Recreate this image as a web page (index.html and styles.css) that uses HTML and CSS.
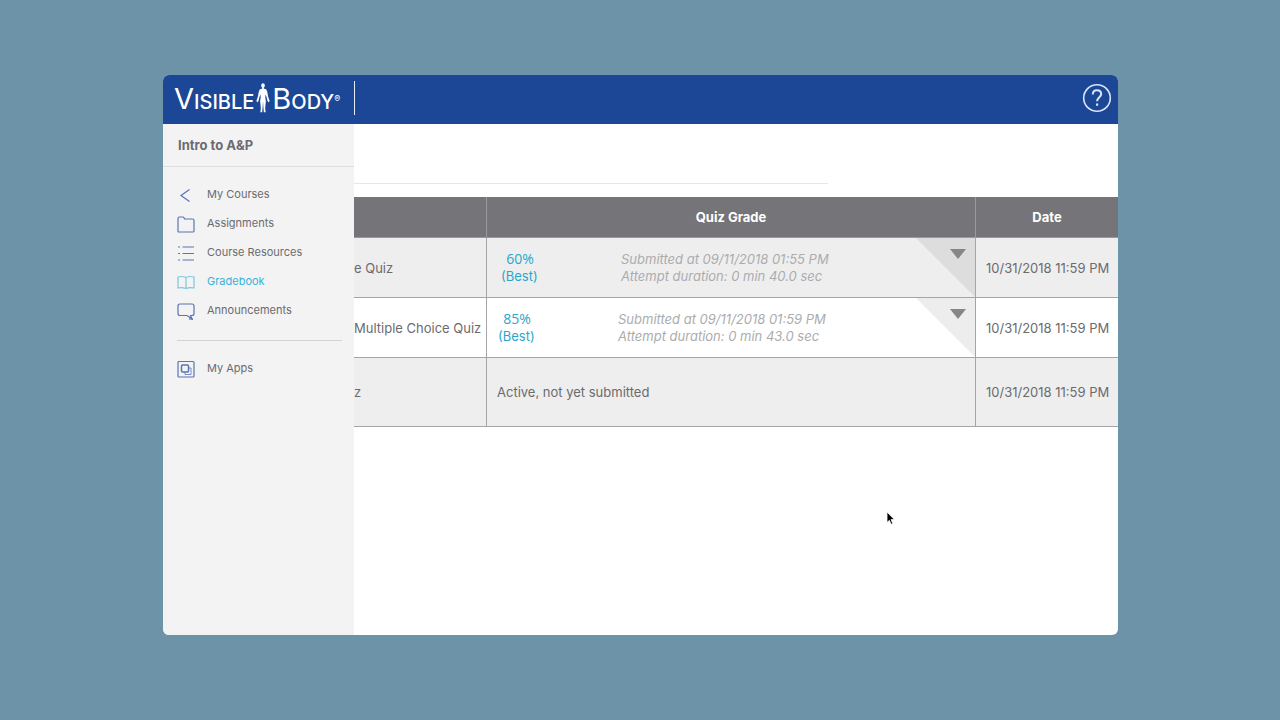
FILE: index.html
```
<!DOCTYPE html>
<html lang="en">
<head>
    <meta charset="UTF-8">
    <meta name="viewport" content="width=device-width, initial-scale=1.0">
    <title>Gradebook - Visible Body</title>
    <link rel="stylesheet" href="styles.css">
</head>
<body>

    <div class="window">
        <!-- Top bar -->
        <header class="topbar">
            <a href="#" class="logo">
                <span class="logo-word"><span class="logo-cap">V</span>ISIBLE</span>
                <svg class="logo-man" width="14" height="30" viewBox="0 0 14 30" fill="#fff">
                    <ellipse cx="7" cy="2.500" rx="1.800" ry="2.200"/>
                    <path d="M6.200 4h1.600v1.500l2.600.9 1 3.200.7 4.200 1.500 4-.9 1.800-1.200-1.500-.9-3.900-1.100-3-.2 3.200.6 3.800-.5 4.200-.2 3.300.5 3.600H7.800L7.300 23 7 18l-.3 5-.5 6.300H4.300l.5-3.600-.2-3.300-.5-4.200.6-3.800-.2-3.200-1.100 3-.9 3.900-1.200 1.500-.9-1.800 1.500-4 .7-4.200 1-3.200 2.600-.9z"/>
                </svg>
                <span class="logo-word"><span class="logo-cap">B</span>ODY</span>
                <span class="logo-mark">®</span>
            </a>
            <button class="help-btn" aria-label="Help">
                <svg width="30" height="30" viewBox="0 0 30 30" fill="none" stroke="#d9e4f8">
                    <circle cx="15" cy="15" r="13.300" stroke-width="1.600"/>
                    <path d="M10.800 11.500c0-2.600 1.700-4.300 4.200-4.300s4.200 1.500 4.200 3.900c0 3.100-4.100 3.300-4.100 7.200" stroke-width="2"/>
                    <path d="M15.100 20.500v2.300" stroke-width="2.200"/>
                </svg>
            </button>
        </header>

        <div class="body">
            <!-- Course menu -->
            <nav class="sidebar">
                <h1 class="course-title">Intro to A&amp;P</h1>
                <div class="menu">
                    <a href="#" class="menu-item">
                        <svg class="icon" viewBox="0 0 18 18"><path d="M12.500 3.500L4 9.500l8.500 6"/></svg>
                        My Courses
                    </a>
                    <a href="#" class="menu-item">
                        <svg class="icon" viewBox="0 0 18 18"><path d="M1 16V3.500q0-1.500 1.500-1.500h3.300q.8 0 1.200.8l.6 1.200h8q1.400 0 1.400 1.400V16q0 1-1 1H2q-1 0-1-1z"/></svg>
                        Assignments
                    </a>
                    <a href="#" class="menu-item">
                        <svg class="icon" viewBox="0 0 18 18"><path d="M1 3h2M5.500 3H17M1 9.500h2M5.500 9.500H17M1 16h2M5.500 16H17"/></svg>
                        Course Resources
                    </a>
                    <a href="#" class="menu-item active">
                        <svg class="icon" viewBox="0 0 18 18"><path d="M9 4.500Q5 2.800 1 4v11q4-.8 8 .5 4-1.300 8-.5V4q-4-1.200-8 .5zM9 4.500V15.500"/></svg>
                        Gradebook
                    </a>
                    <a href="#" class="menu-item">
                        <svg class="icon" viewBox="0 0 18 18"><path d="M3 2h12q2 0 2 2v7.500q0 2-2 2h-1.500l1.500 3.500-5-3.500H3q-2 0-2-2V4q0-2 2-2z"/><path d="M12 17h4"/></svg>
                        Announcements
                    </a>
                </div>
                <div class="menu menu-apps">
                    <a href="#" class="menu-item">
                        <svg class="icon" viewBox="0 0 18 18"><rect x="1" y="1.500" width="16" height="15.500" rx="1"/><rect x="4.500" y="5" width="7" height="7" rx="1" stroke-width="1.500"/><path d="M11.500 8H14v6.500H8V12" stroke-width=".8"/></svg>
                        My Apps
                    </a>
                </div>
            </nav>

            <!-- Grades -->
            <main class="content">
                <div class="page-head"></div>
                <table class="grades">
                    <colgroup>
                        <col class="col-name">
                        <col>
                        <col class="col-date">
                    </colgroup>
                    <thead>
                        <tr>
                            <th></th>
                            <th>Quiz Grade</th>
                            <th>Date</th>
                        </tr>
                    </thead>
                    <tbody>
                        <tr>
                            <td class="name">e Quiz</td>
                            <td class="grade">
                                <div class="attempt">
                                    <div class="score"><span class="percent">60%</span><br>(Best)</div>
                                    <div class="details">Submitted at 09/11/2018 01:55 PM<br>Attempt duration: 0 min 40.0 sec</div>
                                </div>
                                <button class="expand" aria-label="Show attempts"></button>
                            </td>
                            <td>10/31/2018 11:59 PM</td>
                        </tr>
                        <tr>
                            <td class="name">Multiple Choice Quiz</td>
                            <td class="grade">
                                <div class="attempt">
                                    <div class="score"><span class="percent">85%</span><br>(Best)</div>
                                    <div class="details">Submitted at 09/11/2018 01:59 PM<br>Attempt duration: 0 min 43.0 sec</div>
                                </div>
                                <button class="expand" aria-label="Show attempts"></button>
                            </td>
                            <td>10/31/2018 11:59 PM</td>
                        </tr>
                        <tr class="pending">
                            <td class="name">z</td>
                            <td>Active, not yet submitted</td>
                            <td>10/31/2018 11:59 PM</td>
                        </tr>
                    </tbody>
                </table>
            </main>
        </div>
    </div>

    <!-- Mouse pointer -->
    <svg class="pointer" width="10" height="15" viewBox="0 0 10 15">
        <path d="M1 1v10.500l2.400-2.200 1.700 4 1.700-.7-1.700-4h3.300z" fill="#000" stroke="#fff" stroke-width=".8"/>
    </svg>

</body>
</html>
```
FILE: styles.css
```
* {
    box-sizing: border-box;
}

body {
    margin: 0;
    min-height: 100vh;
    padding: 75px 162px 85px 163px;
    display: flex;
    background-color: #6c93a8;
    font-family: Inter, "Liberation Sans", sans-serif;
    font-size: 13px;
    color: #6b6b6f;
}

.window {
    flex: 1;
    min-width: 0;
    display: flex;
    flex-direction: column;
    background-color: white;
    border-radius: 6px;
    overflow: hidden;
}

.topbar {
    display: flex;
    justify-content: space-between;
    align-items: center;
    height: 49px;
    padding: 0 6px 3px 11px;
    background-color: #1c4696;
}

.logo {
    display: flex;
    align-items: center;
    width: 181px;
    height: 34px;
    border-right: 1px solid #e6edfa;
    color: white;
    text-decoration: none;
}

.logo-word {
    padding-top: 5px;
    font-size: 20px;
    font-weight: 500;
    line-height: 34px;
}

.logo-cap {
    font-size: 29px;
    font-weight: 400;
}

.logo-man {
    margin: 0 2px;
}

.logo-mark {
    font-size: 9px;
}

.help-btn {
    display: flex;
    padding: 0;
    border: none;
    background: none;
    cursor: pointer;
}

.body {
    flex: 1;
    display: flex;
}

.sidebar {
    width: 191px;
    background-color: #f3f3f3;
}

.course-title {
    margin: 0;
    height: 43px;
    padding-left: 15px;
    border-bottom: 1px solid #dcdfe3;
    font-size: 13px;
    line-height: 43px;
}

.menu {
    display: grid;
    gap: 9px;
    margin: 0 12px 0 14px;
    padding: 17px 0 20px;
}

.menu-apps {
    border-top: 1px solid #d2d2d4;
}

.menu-item {
    display: flex;
    align-items: center;
    gap: 12px;
    height: 20px;
    font-size: 11px;
    color: #6b6b6f;
    text-decoration: none;
}

.menu-item.active {
    color: #38b1da;
}

.icon {
    width: 18px;
    height: 18px;
    margin-top: 2px;
    fill: none;
    stroke: #5b74b8;
    stroke-width: 1.2;
}

.active .icon {
    stroke: #7cc8e4;
}

.content {
    flex: 1;
    min-width: 0;
    overflow: hidden;
}

.page-head {
    width: 62%;
    height: 60px;
    margin-bottom: 13px;
    border-bottom: 1px solid #e6e6e6;
}

.grades {
    width: 100%;
    table-layout: fixed;
    border-spacing: 0;
    white-space: nowrap;
}

.col-name {
    width: 133px;
}

.col-date {
    width: 142px;
}

.grades th {
    height: 41px;
    padding: 0;
    background-color: #747479;
    border-right: 1px solid #9a9a9e;
    border-bottom: 1px solid #9a9a9e;
    color: white;
    font-size: 13px;
}

.grades td {
    height: 60px;
    padding: 0 0 0 10px;
    border-right: 1px solid #a5a5a8;
    border-bottom: 1px solid #a5a5a8;
}

.grades th:last-child,
.grades td:last-child {
    border-right: none;
}

.grades tbody tr:nth-child(odd) {
    background-color: #eeeeee;
}

.grades .pending td {
    height: 69px;
}

.grades td.name {
    padding-left: 0;
}

.grades td.grade {
    position: relative;
    padding-left: 11px;
}

.grades tr:first-child td.grade {
    padding-left: 14px;
}

.attempt {
    display: flex;
    gap: 85px;
    line-height: 17px;
}

.score {
    width: 35px;
    text-align: center;
    color: #2ba6cb;
}

.percent {
    padding-left: 3px;
    font-family: "Open Sans", sans-serif;
    font-size: 14px;
}

.details {
    padding-top: 1px;
    color: #acacae;
    font-style: italic;
}

/* folded corner with the drop-down arrow */
.expand {
    position: absolute;
    top: 0;
    right: 0;
    width: 59px;
    height: 59px;
    padding: 0;
    border: none;
    background-color: rgba(0, 0, 0, 0.07);
    clip-path: polygon(0 0, 100% 0, 100% 100%);
    cursor: pointer;
}

.expand::after {
    content: "";
    position: absolute;
    top: 11px;
    right: 9px;
    border: 8px solid transparent;
    border-top: 10px solid #85858a;
    border-bottom: none;
}

.pointer {
    position: absolute;
    left: 886px;
    top: 511px;
}
```
